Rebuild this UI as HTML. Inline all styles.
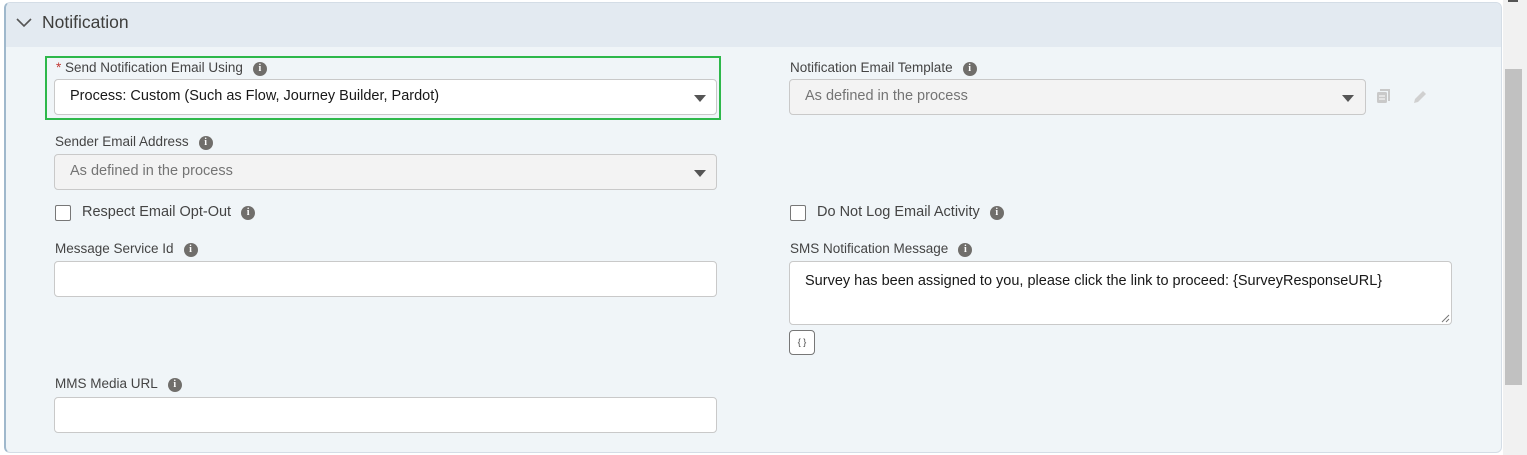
<!DOCTYPE html>
<html><head><style>
body{margin:0;width:1527px;height:455px;background:#fff;font-family:"Liberation Sans",sans-serif;color:#3e3e3c;position:relative;overflow:hidden}
.a{position:absolute}
.lbl{font-size:13.5px;color:#444}
.inp{position:absolute;background:#fff;border:1px solid #c9c9c9;border-radius:4px;box-sizing:border-box;font-size:14.5px;color:#181818}
.dis{background:#f3f3f3;color:#747474}
.info{display:inline-block;width:14px;height:14px;border-radius:50%;background:#706e6b;color:#fff;font-size:10px;font-weight:bold;text-align:center;line-height:14px;font-family:"Liberation Serif",serif;vertical-align:1px;margin-left:10px}
.tri{position:absolute;width:0;height:0;border-left:6px solid transparent;border-right:6px solid transparent;border-top:7px solid #555}
.cb{position:absolute;width:16px;height:16px;border:1px solid #777;border-radius:2px;background:#fff;box-sizing:border-box}
</style></head><body>
<div class="a" style="left:4px;top:2px;width:1498px;height:451px;background:#f0f5f8;border:1px solid #d4dde6;border-left:2px solid #9fb8cc;border-radius:6px;box-sizing:border-box"></div>
<div class="a" style="left:6px;top:3px;width:1495px;height:44px;background:#e3eaf1;border-radius:5px 5px 0 0"></div>
<svg class="a" style="left:16px;top:18px" width="16" height="10"><path d="M1 1 L8 8 L15 1" fill="none" stroke="#555" stroke-width="1.6"/></svg>
<div class="a" style="left:42px;top:12px;font-size:17.5px;color:#3e3e3c">Notification</div>
<div class="a" style="left:1503px;top:0;width:24px;height:455px;background:#f1f1f1"></div>
<div class="a" style="left:1505px;top:69px;width:17px;height:316px;background:#c1c1c1"></div>
<div class="a" style="left:1508px;top:0;width:10px;height:2px;background:#555"></div>

<div class="a" style="left:45px;top:56px;width:676px;height:64px;border:2px solid #2eb84b;box-sizing:border-box"></div>
<div class="a lbl" style="left:56px;top:60px"><span style="color:#c23934">*</span> Send Notification Email Using<span class="info">i</span></div>
<div class="inp" style="left:54px;top:79px;width:663px;height:36px;padding:8px 15px">Process: Custom (Such as Flow, Journey Builder, Pardot)</div>
<div class="tri" style="left:694px;top:95px"></div>

<div class="a lbl" style="left:790px;top:60px">Notification Email Template<span class="info">i</span></div>
<div class="inp dis" style="left:789px;top:79px;width:577px;height:36px;padding:8px 15px">As defined in the process</div>
<div class="tri" style="left:1342px;top:95px"></div>
<svg class="a" style="left:1376px;top:88px" width="16" height="16"><rect x="1" y="4" width="10" height="11" rx="1.5" fill="#c9c9c9"/><path d="M5 3V2h8v10h-1" fill="none" stroke="#c9c9c9" stroke-width="2"/><path d="M3 8h6M3 11h6" stroke="#fff"/></svg>
<svg class="a" style="left:1412px;top:89px" width="16" height="16"><path d="M2 14 L3 10 L11 2 L14 5 L6 13 Z" fill="#d0d0d0"/></svg>

<div class="a lbl" style="left:55px;top:134px">Sender Email Address<span class="info">i</span></div>
<div class="inp dis" style="left:54px;top:154px;width:663px;height:36px;padding:8px 15px">As defined in the process</div>
<div class="tri" style="left:694px;top:170px"></div>

<div class="cb" style="left:55px;top:205px"></div>
<div class="a" style="left:82px;top:204px;font-size:14.5px;color:#444">Respect Email Opt-Out<span class="info">i</span></div>
<div class="cb" style="left:790px;top:205px"></div>
<div class="a" style="left:817px;top:204px;font-size:14.5px;color:#444">Do Not Log Email Activity<span class="info">i</span></div>

<div class="a lbl" style="left:55px;top:241px">Message Service Id<span class="info">i</span></div>
<div class="inp" style="left:54px;top:261px;width:663px;height:36px"></div>
<div class="a lbl" style="left:790px;top:241px">SMS Notification Message<span class="info">i</span></div>
<div class="inp" style="left:789px;top:261px;width:663px;height:64px;padding:11px 15px">Survey has been assigned to you, please click the link to proceed: {SurveyResponseURL}</div>
<svg class="a" style="left:1440px;top:313px" width="10" height="10"><path d="M9 2L2 9M9 6L6 9" stroke="#777"/></svg>
<div class="a" style="left:789px;top:330px;width:26px;height:25px;border:1px solid #777;border-radius:4px;background:#fff;box-sizing:border-box;font-size:9px;text-align:center;line-height:23px;color:#444">{ }</div>

<div class="a lbl" style="left:55px;top:376px">MMS Media URL<span class="info">i</span></div>
<div class="inp" style="left:54px;top:397px;width:663px;height:36px"></div>
</body></html>
